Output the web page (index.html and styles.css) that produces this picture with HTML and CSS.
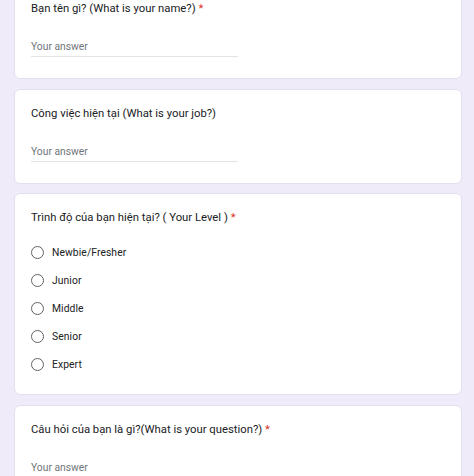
FILE: index.html
```html
<!DOCTYPE html>
<html lang="vi">
<head>
<meta charset="utf-8">
<title>Form</title>
<link rel="stylesheet" href="styles.css">
</head>
<body>
<div class="form">
  <div class="card">
    <div class="question">Bạn tên gì? (What is your name?) <span class="req">*</span></div>
    <div class="answer">Your answer</div>
  </div>
  <div class="card">
    <div class="question">Công việc hiện tại (What is your job?)</div>
    <div class="answer">Your answer</div>
  </div>
  <div class="card card-choice">
    <div class="question">Trình độ của bạn hiện tại? ( Your Level ) <span class="req">*</span></div>
    <div class="options">
      <div class="option"><span class="radio"></span><span class="label">Newbie/Fresher</span></div>
      <div class="option"><span class="radio"></span><span class="label">Junior</span></div>
      <div class="option"><span class="radio"></span><span class="label">Middle</span></div>
      <div class="option"><span class="radio"></span><span class="label">Senior</span></div>
      <div class="option"><span class="radio"></span><span class="label">Expert</span></div>
    </div>
  </div>
  <div class="card">
    <div class="question">Câu hỏi của bạn là gì?(What is your question?) <span class="req">*</span></div>
    <div class="answer">Your answer</div>
  </div>
</div>
</body>
</html>
```
FILE: styles.css
```css
html, body {
  margin: 0;
  padding: 0;
  background: #f0ebf8;
  font-family: Roboto, "Noto Sans", Arial, sans-serif;
  color: #202124;
  overflow: hidden;
}
.form {
  margin-top: -16px;
  padding: 0 12px 0 14px;
  display: flex;
  flex-direction: column;
  gap: 9.5px;
}
.card {
  background: #fff;
  border-radius: 6px;
  border: 1px solid #e4dff0;
  padding: 16px 16px 21px;
}
.card-choice {
  padding-bottom: 16px;
}
.question {
  font-size: 11.3px;
  line-height: 16px;
  color: #202124;
}
.req {
  color: #d93025;
}
.answer {
  margin-top: 22px;
  width: 207px;
  font-size: 10.3px;
  line-height: 16px;
  color: #70757a;
  padding-bottom: 1px;
  border-bottom: 1px solid #e3e3e3;
}
.options {
  margin-top: 12px;
  display: flex;
  flex-direction: column;
}
.option {
  height: 28px;
  display: flex;
  align-items: center;
  gap: 8px;
}
.radio {
  width: 11px;
  height: 11px;
  border: 1.5px solid #5f6368;
  border-radius: 50%;
  flex: none;
}
.label {
  font-size: 10.3px;
  letter-spacing: 0.1px;
  color: #202124;
}
```
